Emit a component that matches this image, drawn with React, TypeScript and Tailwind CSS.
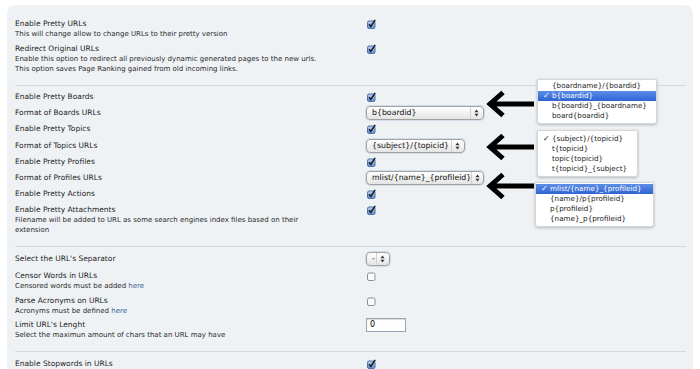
import React from "react";

function Check({ on = true }: { on?: boolean }) {
  if (!on) {
    return (
      <svg width="9" height="9" viewBox="0 0 9 9" className="ml-[1px]">
        <rect x="0.5" y="1" width="7.5" height="7.5" rx="1.5" fill="#fbfbfb" stroke="#8e8e8e" />
      </svg>
    );
  }
  return (
    <svg width="10" height="10" viewBox="0 0 10 10" className="ml-[1px]">
      <defs>
        <linearGradient id="cb" x1="0" y1="0" x2="0" y2="1">
          <stop offset="0" stopColor="#b9d1f2" />
          <stop offset="1" stopColor="#5f8fd6" />
        </linearGradient>
      </defs>
      <rect x="0.5" y="2" width="7.5" height="7.5" rx="1.5" fill="url(#cb)" stroke="#4e73a8" />
      <path d="M2 5.2 L3.8 7.4 L8.2 0.8" stroke="#1a1a1a" strokeWidth="1.5" fill="none" />
    </svg>
  );
}

function Arrows() {
  return (
    <svg width="5" height="8" viewBox="0 0 5 8">
      <path d="M0.5 3.3 L2.5 0.5 L4.5 3.3 Z M0.5 4.7 L2.5 7.5 L4.5 4.7 Z" fill="#333" />
    </svg>
  );
}

function Select({ value, w }: { value: string; w: string }) {
  return (
    <div
      className={`flex h-[14px] ${w} items-center rounded-[4px] border border-[#a2a2a2] bg-linear-to-b from-white to-[#e4e4e4] pl-[5px] pr-[4px] text-[7.8px] text-[#111] shadow-[0_0_0_1px_#d3dde9]`}
    >
      <span className="whitespace-nowrap">{value}</span>
      <span className="ml-auto flex h-full items-center border-l border-[#d0d0d0] pl-[3px]">
        <Arrows />
      </span>
    </div>
  );
}

function Row({
  title,
  desc,
  control,
  className = "",
}: {
  title: string;
  desc?: React.ReactNode[];
  control?: React.ReactNode;
  className?: string;
}) {
  return (
    <div className={`flex ${className}`}>
      <div className="w-[351px]">
        <div className="h-[10px] text-[7.5px] leading-[10px] text-[#1e1e1e]">{title}</div>
        {desc?.map((d, i) => (
          <div key={i} className="h-[10px] text-[7px] leading-[10px] text-[#2a2a2a] whitespace-nowrap">
            {d}
          </div>
        ))}
      </div>
      <div className="flex h-[10px] items-center">{control}</div>
    </div>
  );
}

function LineRow({ title, control, h }: { title: string; control: React.ReactNode; h: string }) {
  return (
    <div className={`flex ${h} items-center`}>
      <div className="w-[351px] text-[7.5px] leading-[10px] text-[#1e1e1e]">{title}</div>
      <div className="flex items-center">{control}</div>
    </div>
  );
}

function BigArrow({ top }: { top: string }) {
  return (
    <svg width="50" height="28" viewBox="0 0 50 28" className={`absolute left-[486px] ${top}`}>
      <path d="M4 14 L48 14 M17 2.5 L4 14 L17 25.5" stroke="#000" strokeWidth="5" fill="none" strokeLinejoin="miter" />
    </svg>
  );
}

function Popup({
  items,
  selected,
  hl,
  className,
}: {
  items: string[];
  selected: number;
  hl: boolean;
  className: string;
}) {
  return (
    <div
      className={`absolute rounded-b-[3px] border border-[#d6d6d6] bg-white pb-[2px] shadow-[0_1px_3px_rgba(0,0,0,0.25)] ${className}`}
    >
      {items.map((it, i) => {
        const active = i === selected;
        return (
          <div
            key={it}
            className={`relative flex h-[10px] items-center pl-[14px] text-[7.2px] leading-[10px] whitespace-nowrap ${
              active && hl ? "bg-linear-to-b from-[#5b8ee6] to-[#2f63d3] text-white" : "text-[#1a1a1a]"
            }`}
          >
            {active && <span className="absolute left-[5px] text-[8px]">✓</span>}
            {it}
          </div>
        );
      })}
    </div>
  );
}

export default function App() {
  const link = (t: string) => <span className="text-[#40649a]">{t}</span>;
  return (
    <div className="relative h-[369px] w-[700px] overflow-hidden bg-white font-['DejaVu_Sans',sans-serif]">
      <div className="ml-[7px] mt-[5px] h-[400px] w-[686px] rounded-[8px] bg-[#eff2f5] pl-[8px] pr-[7px] pt-[14px]">
        <Row
          title="Enable Pretty URLs"
          desc={["This will change allow to change URLs to their pretty version"]}
          control={<Check />}
        />
        <Row
          className="mt-[5px]"
          title="Redirect Original URLs"
          desc={[
            "Enable this option to redirect all previously dynamic generated pages to the new urls.",
            "This option saves Page Ranking gained from old incoming links.",
          ]}
          control={<Check />}
        />
        <div className="mt-[11px] h-px bg-[#d6dadf]" />

        <div className="pt-[3px]">
          <LineRow h="h-[16px]" title="Enable Pretty Boards" control={<Check />} />
          <LineRow h="h-[16px]" title="Format of Boards URLs" control={<Select value="b{boardid}" w="w-[118px]" />} />
          <LineRow h="h-[16px]" title="Enable Pretty Topics" control={<Check />} />
          <LineRow
            h="h-[17px]"
            title="Format of Topics URLs"
            control={<Select value="{subject}/{topicid}" w="w-[99px]" />}
          />
          <LineRow h="h-[16px]" title="Enable Pretty Profiles" control={<Check />} />
          <LineRow
            h="h-[16px]"
            title="Format of Profiles URLs"
            control={<Select value="mlist/{name}_{profileid}" w="w-[118px]" />}
          />
          <LineRow h="h-[16px]" title="Enable Pretty Actions" control={<Check />} />
          <Row
            className="pt-[3px]"
            title="Enable Pretty Attachments"
            desc={["Filename will be added to URL as some search engines index files based on their", "extension"]}
            control={<Check />}
          />
        </div>
        <div className="mt-[11px] h-px bg-[#d6dadf]" />

        <div className="pt-[7px]">
          <Row title="Select the URL's Separator" control={<Select value="-" w="w-[24px]" />} />
          <Row
            className="mt-[7px]"
            title="Censor Words in URLs"
            desc={[<>Censored words must be added {link("here")}</>]}
            control={<Check on={false} />}
          />
          <Row
            className="mt-[5px]"
            title="Parse Acronyms on URLs"
            desc={[<>Acronyms must be defined {link("here")}</>]}
            control={<Check on={false} />}
          />
          <Row
            className="mt-[4px]"
            title="Limit URL's Lenght"
            desc={["Select the maximun amount of chars that an URL may have"]}
            control={
              <div className="flex h-[14px] w-[40px] items-center border border-[#9aa4b0] bg-white pl-[3px] text-[8px] shadow-[inset_0_1px_1px_rgba(0,0,0,0.15)]">
                0
              </div>
            }
          />
        </div>
        <div className="mt-[11px] h-px bg-[#d6dadf]" />

        <div className="pt-[7px]">
          <Row title="Enable Stopwords in URLs" control={<Check />} />
        </div>
      </div>

      <BigArrow top="top-[90px]" />
      <BigArrow top="top-[133px]" />
      <BigArrow top="top-[172px]" />

      <Popup
        className="left-[537px] top-[79px] w-[120px] pt-[1px]"
        items={["{boardname}/{boardid}", "b{boardid}", "b{boardid}_{boardname}", "board{boardid}"]}
        selected={1}
        hl
      />
      <Popup
        className="left-[537px] top-[130px] w-[101px] pt-[3px]"
        items={["{subject}/{topicid}", "t{topicid}", "topic{topicid}", "t{topicid}_{subject}"]}
        selected={0}
        hl={false}
      />
      <Popup
        className="left-[535px] top-[182px] w-[119px] pt-[1px]"
        items={["mlist/{name}_{profileid}", "{name}/p{profileid}", "p{profileid}", "{name}_p{profileid}"]}
        selected={0}
        hl
      />
    </div>
  );
}
